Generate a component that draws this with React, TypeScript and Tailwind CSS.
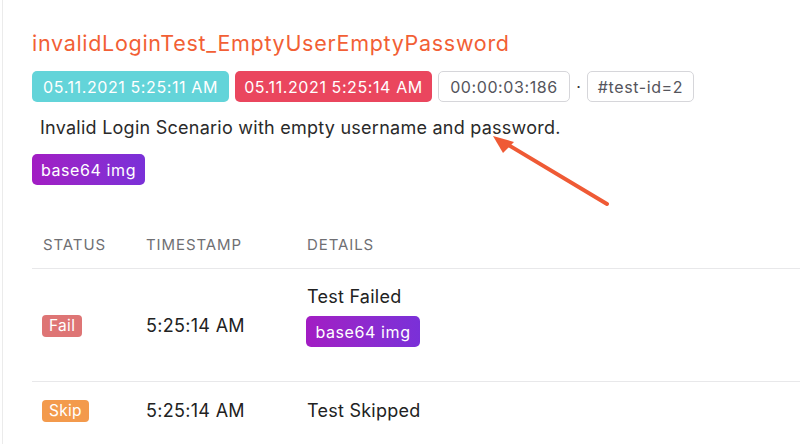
import React from "react";

const font = { fontFamily: 'Inter, "Liberation Sans", Arial, sans-serif' };

function Badge({ className, children }: { className: string; children: React.ReactNode }) {
  return (
    <span className={`inline-flex items-center justify-center h-[31px] rounded-[5px] text-[16px] tracking-[0.6px] leading-none ${className}`}>
      {children}
    </span>
  );
}

export default function App() {
  return (
    <div className="w-[800px] h-[444px] overflow-hidden bg-white relative" style={font}>
      <div className="ml-[2px] h-full border-l border-[#ebebeb] pl-[29px]">
        <h1 className="pt-[29px] text-[21.5px] tracking-[0.7px] leading-[28px] text-[#f25f35]">
          invalidLoginTest_EmptyUserEmptyPassword
        </h1>
        <div className="mt-[14px] flex items-center">
          <Badge className="bg-[#63d4d9] text-white w-[197px]">05.11.2021 5:25:11 AM</Badge>
          <Badge className="bg-[#ea465e] text-white w-[197px] ml-[6px]">05.11.2021 5:25:14 AM</Badge>
          <Badge className="border border-[#d6d6da] text-[#55555c] w-[132px] ml-[6px]">00:00:03:186</Badge>
          <span className="text-[#333] w-[17px] text-center text-[16px]">·</span>
          <Badge className="border border-[#d6d6da] text-[#55555c] w-[107px]">#test-id=2</Badge>
        </div>
        <p className="mt-[14px] pl-[8px] text-[18px] tracking-[0.25px] leading-[24px] text-[#2a2a2a]">
          Invalid Login Scenario with empty username and password.
        </p>
        <div className="mt-[14px]">
          <Badge className="bg-gradient-to-r from-[#a21cc3] to-[#7a30d8] text-white w-[113px]">base64 img</Badge>
        </div>

        <div className="mt-[50px]">
          <div className="grid grid-cols-[103px_161px_1fr] text-[15px] leading-[20px] text-[#6f6f73] tracking-[0.06em] pb-[13px] border-b border-[#e8e8ea]">
            <div className="pl-[11px]">STATUS</div>
            <div className="pl-[11px]">TIMESTAMP</div>
            <div className="pl-[11px]">DETAILS</div>
          </div>
          <div className="grid grid-cols-[103px_161px_1fr] h-[113px] items-center border-b border-[#e8e8ea]">
            <div className="pl-[10px]">
              <span className="inline-flex items-center h-[22px] px-[7px] rounded-[4px] bg-[#de7575] text-white text-[15.5px] tracking-[0.3px] leading-none">Fail</span>
            </div>
            <div className="pl-[11px] text-[18px] tracking-[0.3px] text-[#222]">5:25:14 AM</div>
            <div className="pl-[11px] pt-[2px]">
              <div className="text-[18px] tracking-[0.25px] leading-[24px] text-[#222]">Test Failed</div>
              <div className="mt-[7px] mb-[20px] -ml-[1px]">
                <Badge className="bg-gradient-to-r from-[#a21cc3] to-[#7a30d8] text-white w-[114px]">base64 img</Badge>
              </div>
            </div>
          </div>
          <div className="grid grid-cols-[103px_161px_1fr] h-[56px] items-center">
            <div className="pl-[10px]">
              <span className="inline-flex items-center h-[22px] px-[7px] rounded-[4px] bg-[#f39a4c] text-white text-[15.5px] tracking-[0.3px] leading-none">Skip</span>
            </div>
            <div className="pl-[11px] text-[18px] tracking-[0.3px] text-[#222]">5:25:14 AM</div>
            <div className="pl-[11px] text-[18px] tracking-[0.25px] text-[#222]">Test Skipped</div>
          </div>
        </div>
      </div>

      <svg className="absolute left-0 top-0 pointer-events-none" width="800" height="444">
        <line x1="607" y1="204" x2="505" y2="143" stroke="#ef5a35" strokeWidth="4" strokeLinecap="round" />
        <polygon points="493,136 503,153 514,142" fill="#ef5a35" />
      </svg>
    </div>
  );
}
